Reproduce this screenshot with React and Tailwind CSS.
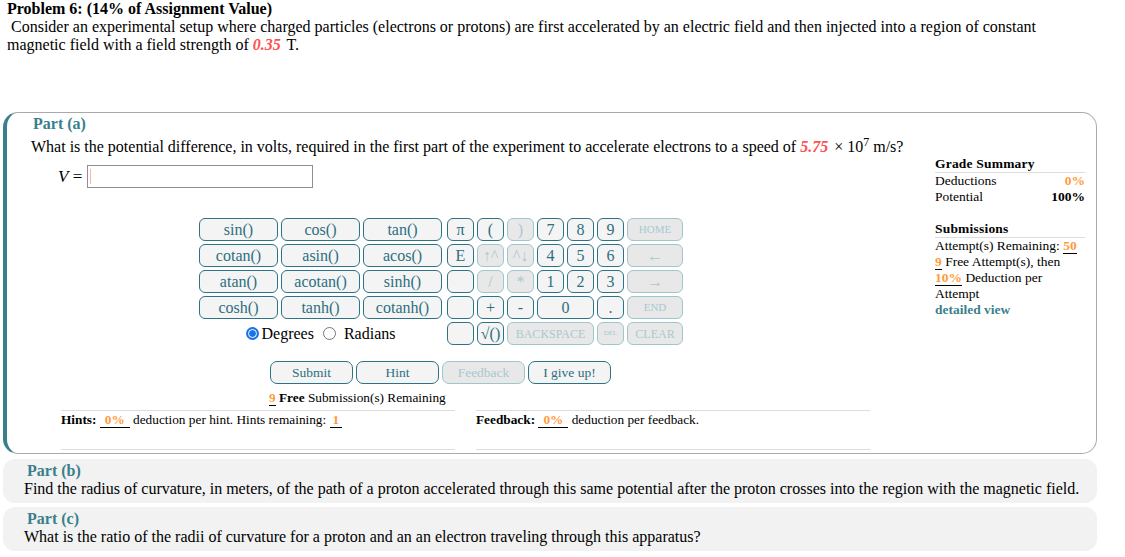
import React from "react";

const EN = "border-[#2d7387] bg-[#f4f4f4] text-[#2d6f80]";
const DIS = "border-[#9fc5cd] bg-[#e8e8e8] text-[#a8c8d0]";

function CB({ children, dis, cls = "", size = "text-[16px]" }) {
  return (
    <div
      className={`h-[23px] rounded-[6px] border flex items-center justify-center leading-none ${size} ${dis ? DIS : EN} ${cls}`}
    >
      {children}
    </div>
  );
}

function Radio({ checked }) {
  if (checked)
    return (
      <span className="inline-flex w-[13px] h-[13px] rounded-full bg-[#1a73e8] items-center justify-center">
        <span className="inline-block w-[9px] h-[9px] rounded-full border border-white bg-[#1a73e8]" />
      </span>
    );
  return <span className="inline-block w-[13px] h-[13px] rounded-full border border-[#767676] bg-white" />;
}

function Und({ children, px = "px-[5px]" }) {
  return (
    <span className={`border-b border-black text-[#ff9b3d] font-bold ${px}`}>{children}</span>
  );
}

export default function App() {
  const funcs = [
    "sin()", "cos()", "tan()",
    "cotan()", "asin()", "acos()",
    "atan()", "acotan()", "sinh()",
    "cosh()", "tanh()", "cotanh()",
  ];
  return (
    <div className="font-['Liberation_Serif',serif] text-black bg-white w-[1125px] h-[557px] overflow-hidden">
      <div className="pl-[7px] pr-[32px] text-[16px] leading-[18px]">
        <div className="font-bold">Problem 6: (14% of Assignment Value)</div>
        <div>
          &nbsp;Consider an experimental setup where charged particles (electrons or protons) are first accelerated by an electric field and then injected into a region of constant
          magnetic field with a field strength of <span className="inline-block pr-[2px] text-[#ff5050] italic font-bold">0.35</span> T.
        </div>
      </div>

      <div className="ml-[3px] mr-[28px] mt-[58px] border border-[#aaaaaa] border-l-4 border-l-[#3a7f8c] rounded-[15px] pb-[3px] text-[16px] leading-[18px]">
        <div className="pl-[26px] pt-[2px] font-bold text-[#3a7f8c]">Part (a)</div>
        <div className="pl-[24px] mt-[5px]">
          What is the potential difference, in volts, required in the first part of the experiment to accelerate electrons to a speed of{" "}
          <span className="inline-block pr-[2px] text-[#ff5050] italic font-bold">5.75</span> × 10<sup className="text-[12px]">7</sup> m/s?
        </div>
        <div className="flex">
          <div className="flex-1">
            <div className="mt-[9px] flex items-center h-[23px]">
              <span className="ml-[51px] w-[29px] italic text-[17px]">V<span className="not-italic"> =</span></span>
              <div className="w-[226px] h-[23px] border border-[#8f8f8f] flex items-center">
                <span className="ml-[2px] w-[1px] h-[15px] bg-[#f9b9a0]" />
              </div>
            </div>

            <div className="mt-[30px] ml-[192px] flex gap-[5px]">
              <div className="grid grid-cols-[79px_79px_79px] gap-[3px]">
                {funcs.map((f) => (
                  <CB key={f}>{f}</CB>
                ))}
                <div className="col-span-3 h-[23px] flex items-center justify-center text-[16px]">
                  <Radio checked />
                  <span className="ml-[3px]">Degrees</span>
                  <span className="ml-[9px] flex items-center"><Radio /></span>
                  <span className="ml-[8px]">Radians</span>
                </div>
              </div>
              <div className="grid grid-cols-[27px_27px_27px_27px_27px_27px_56px] gap-[3px]">
                <CB>π</CB>
                <CB>(</CB>
                <CB dis>)</CB>
                <CB>7</CB>
                <CB>8</CB>
                <CB>9</CB>
                <CB dis size="text-[11px]">HOME</CB>

                <CB>E</CB>
                <CB dis>↑^</CB>
                <CB dis>^↓</CB>
                <CB>4</CB>
                <CB>5</CB>
                <CB>6</CB>
                <CB dis>←</CB>

                <CB></CB>
                <CB dis>/</CB>
                <CB dis>*</CB>
                <CB>1</CB>
                <CB>2</CB>
                <CB>3</CB>
                <CB dis>→</CB>

                <CB></CB>
                <CB>+</CB>
                <CB>-</CB>
                <CB cls="col-span-2">0</CB>
                <CB>.</CB>
                <CB dis size="text-[11px]">END</CB>

                <CB></CB>
                <CB>√()</CB>
                <CB dis cls="col-span-3" size="text-[12px]">BACKSPACE</CB>
                <CB dis size="text-[7px]">DEL</CB>
                <CB dis size="text-[12px]">CLEAR</CB>
              </div>
            </div>

            <div className="mt-[16px] ml-[263px] flex gap-[3px] text-[13.5px]">
              <div className={`w-[83px] h-[23px] rounded-[7px] border flex items-center justify-center ${EN}`}>Submit</div>
              <div className={`w-[83px] h-[23px] rounded-[7px] border flex items-center justify-center ${EN}`}>Hint</div>
              <div className={`w-[83px] h-[23px] rounded-[7px] border flex items-center justify-center ${DIS}`}>Feedback</div>
              <div className={`w-[83px] h-[23px] rounded-[7px] border flex items-center justify-center ${EN}`}>I give up!</div>
            </div>

            <div className="mt-[6px] ml-[262px] text-[13.3px] leading-[16px]">
              <Und px="px-0">9</Und> <b>Free</b> Submission(s) Remaining
            </div>

            <div className="mt-[4px] ml-[54px] flex gap-[21px] text-[13.3px] leading-[16px]">
              <div className="w-[394px] h-[40px] border-t border-b border-[#dddddd] pt-[1px]">
                <b>Hints:</b> <Und>0%</Und> deduction per hint. Hints remaining: <Und px="px-[3px]">1</Und>
              </div>
              <div className="w-[394px] h-[40px] border-t border-b border-[#dddddd] pt-[1px]">
                <b>Feedback:</b> <Und>0%</Und> deduction per feedback.
              </div>
            </div>
          </div>

          <div className="w-[150px] mr-[11px] text-[13.5px] leading-[16px]">
            <div className="font-bold tracking-[0.2px] border-b border-[#dddddd]">Grade Summary</div>
            <div className="flex justify-between">
              <span>Deductions</span>
              <span className="text-[#ff9b3d] font-bold">0%</span>
            </div>
            <div className="flex justify-between">
              <span>Potential</span>
              <span className="font-bold">100%</span>
            </div>
            <div className="mt-[16px] font-bold tracking-[0.2px] border-b border-[#dddddd]">Submissions</div>
            <div>
              Attempt(s) Remaining: <Und px="px-0">50</Und>
            </div>
            <div>
              <Und px="px-0">9</Und> Free Attempt(s), then
            </div>
            <div>
              <Und px="px-0">10%</Und> Deduction per
            </div>
            <div>Attempt</div>
            <div className="font-bold text-[#3a7f8c]">detailed view</div>
          </div>
        </div>
      </div>

      <div className="ml-[3px] mr-[28px] mt-[5px] bg-[#f2f2f2] rounded-[12px] pt-[3px] pb-[5px] text-[16px] leading-[18px]">
        <div className="pl-[24px] font-bold text-[#3a7f8c]">Part (b)</div>
        <div className="pl-[21px]">
          Find the radius of curvature, in meters, of the path of a proton accelerated through this same potential after the proton crosses into the region with the magnetic field.
        </div>
      </div>
      <div className="ml-[3px] mr-[28px] mt-[4px] bg-[#f2f2f2] rounded-[12px] pt-[3px] pb-[5px] text-[16px] leading-[18px]">
        <div className="pl-[24px] font-bold text-[#3a7f8c]">Part (c)</div>
        <div className="pl-[21px]">
          What is the ratio of the radii of curvature for a proton and an an electron traveling through this apparatus?
        </div>
      </div>
    </div>
  );
}
